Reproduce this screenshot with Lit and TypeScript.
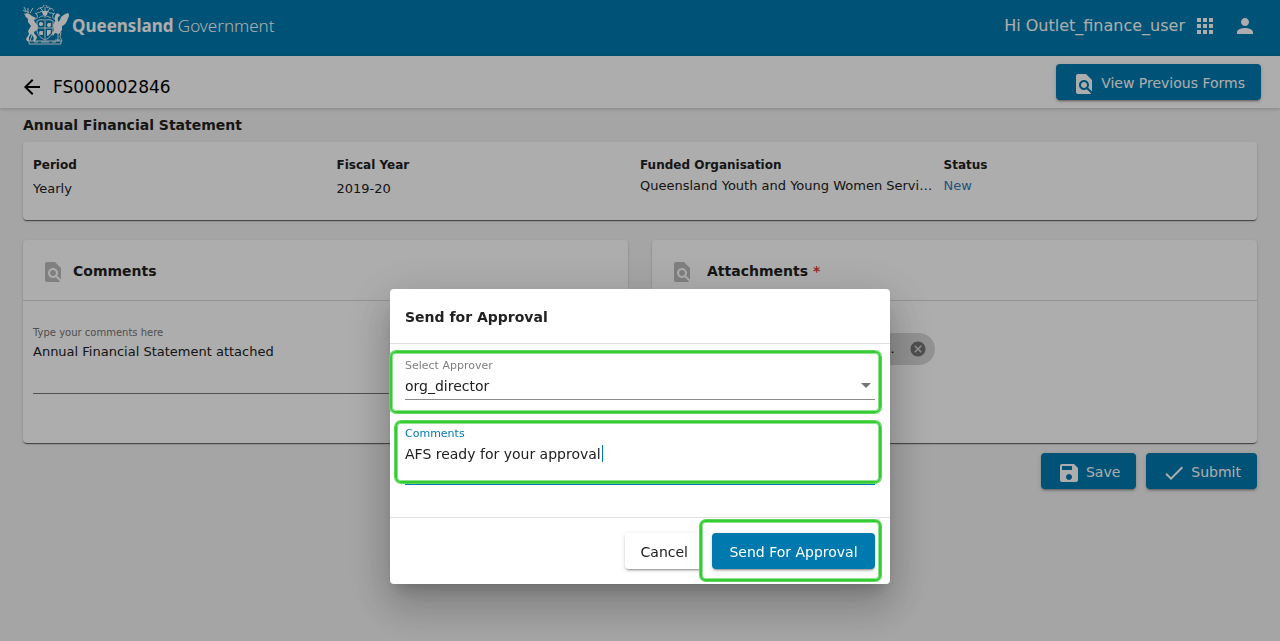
import { LitElement, html, css, svg } from "lit";
import { customElement, state } from "lit/decorators.js";

const paths: Record<string, string> = {
  find: "M20 19.59V8l-6-6H6c-1.1 0-1.99.9-1.99 2L4 20c0 1.1.89 2 1.99 2H18c.45 0 .85-.15 1.19-.4l-4.43-4.43c-.8.52-1.74.83-2.76.83-2.76 0-5-2.24-5-5s2.24-5 5-5 5 2.24 5 5c0 1.02-.31 1.96-.83 2.75L20 19.59zM9 13c0 1.66 1.34 3 3 3s3-1.34 3-3-1.34-3-3-3-3 1.34-3 3z",
  save: "M17 3H5c-1.11 0-2 .9-2 2v14c0 1.1.89 2 2 2h14c1.1 0 2-.9 2-2V7l-4-4zm-5 16c-1.66 0-3-1.34-3-3s1.34-3 3-3 3 1.34 3 3-1.34 3-3 3zm3-10H5V5h10v4z",
  check: "M9 16.17L4.83 12l-1.42 1.41L9 19 21 7l-1.41-1.41z",
  apps: "M4 8h4V4H4v4zm6 12h4v-4h-4v4zm-6 0h4v-4H4v4zm0-6h4v-4H4v4zm6 0h4v-4h-4v4zm6-10v4h4V4h-4zm-6 4h4V4h-4v4zm6 6h4v-4h-4v4zm0 6h4v-4h-4v4z",
  person: "M12 12c2.21 0 4-1.79 4-4s-1.79-4-4-4-4 1.79-4 4 1.79 4 4 4zm0 2c-2.67 0-8 1.34-8 4v2h16v-2c0-2.66-5.33-4-8-4z",
  back: "M20 11H7.83l5.59-5.59L12 4l-8 8 8 8 1.41-1.41L7.83 13H20v-2z",
  cancel: "M12 2C6.47 2 2 6.47 2 12s4.47 10 10 10 10-4.47 10-10S17.53 2 12 2zm5 13.59L15.59 17 12 13.41 8.41 17 7 15.59 10.59 12 7 8.41 8.41 7 12 10.59 15.59 7 17 8.41 13.41 12 17 15.59z",
};

const icon = (name: string, size = 24) =>
  html`<svg class="icon" width=${size} height=${size} viewBox="0 0 24 24" aria-hidden="true">
    ${svg`<path d=${paths[name]} fill="currentColor"/>`}
  </svg>`;

const crest = html`<svg class="crest" width="46" height="40" viewBox="0 0 46 40" fill="none" stroke="#fff" aria-hidden="true">
  <g stroke-width="0.9">
    <path d="M14 5c2-3 3-1 4-3 1 2 2 0 3-2 2-1 3 1 3 3 1-2 3-1 3 1 2-1 3 0 4 2M13 9c2-3 4 0 5-3 2 2 4 2 7 0 1 3 3 1 6 3M16 13c2-3 4-1 6-3 2 2 3 1 6 3"/>
    <path d="M12 8c2 1 3 3 2 5s-3 1-3-1M32 8c-2 1-3 3-2 5s2 1 3-1M17 3l3 3M27 3l-2 3M22 2v11"/>
    <path d="M14 16c3-2 5-1 8-1s5-1 8 1v9c0 5-4 8-8 10-4-2-8-5-8-10z"/>
    <path d="M14 23h16M22 16v18M16 19h4M18 17v4M25 18l3 3M28 18l-3 3M17 26l3 4M20 26l-3 4M25 26v5M27 26v3"/>
    <path d="M1 2l2 4 3 2M0 5l3 2M5 3v4M1 9l4 1M10 3l-3 5"/>
    <path d="M5 36h34M6 39h32M6 36v3M11 37h4M18 37h8M29 37h4M38 36v3"/>
    <path d="M35 28v8M38 27l-1 5 2 4M32 35h5M7 36l2-6M12 35l-2-5"/>
  </g>
  <g fill="#fff" stroke="none">
    <path d="M3 8c2 0 4 1 6 3l4 2-2 2c1 3 3 4 4 6l-1 4-3 2c0 3 3 3 3 6l-2 3h-2l1-4-3-3-2 3v4H4l-1-2 3-5-1-3 3-5-3-4v-3L2 11z"/>
    <path d="M38 12c2-1 3-3 7-4 1 1 1 2 1 3-2 4-2 8-7 10l0 4-3 4-4-1-2 3-1-2 2-4-1-5 2-4 3 1 2-2z"/>
    <path d="M33 9c2-1 4 0 4 2l-2 1c-1 3 1 5 0 8h-2c0-3-2-5-1-9z"/>
    <circle cx="18" cy="19" r="2"/><circle cx="26" cy="20" r="2"/><circle cx="18" cy="28" r="2"/>
    <path d="M19 6h6l-1 4h-4zM24 25h4l-1 4-3 2z"/>
  </g>
</svg>`;

@customElement("app-root")
export class AppRoot extends LitElement {
  @state() private open = true;

  static styles = css`
    :host {
      --blue: #007aae;
      display: block;
      min-height: 100vh;
      background: #f3f3f3;
      color: #212121;
      font-family: Verdana, "DejaVu Sans", sans-serif;
      font-size: 13px;
      line-height: 20px;
    }
    * { box-sizing: border-box; }
    h1, h2, p, dl, dd, dt { margin: 0; font-size: inherit; }
    button, select, textarea { font: inherit; color: inherit; border: 0; background: none; padding: 0; }
    button { cursor: pointer; }
    .icon { display: block; flex: none; }
    .top {
      display: flex; align-items: center; justify-content: space-between;
      height: 56px; padding: 0 23px; background: var(--blue); color: #fff;
    }
    .brand { display: flex; align-items: center; gap: 3px; font: 300 17px/24px "Noto Sans", sans-serif; }
    .brand b { font-weight: 700; }
    .brand .crest { margin-bottom: 7px; }
    .brand p { margin-bottom: 5px; }
    .user { display: flex; align-items: center; gap: 8px; font-size: 16px; margin-bottom: 4px; }
    .user button + button { margin-left: 8px; }
    .bar {
      display: flex; align-items: center; justify-content: space-between;
      height: 52px; padding: 0 19px 0 20px; background: #fff; color: #000;
      box-shadow: 0 1px 4px rgba(0, 0, 0, 0.2); font-size: 17px;
    }
    .crumb { display: flex; align-items: center; gap: 9px; margin-top: 9px; }
    .crumb h1 { font-weight: 400; }
    .btn {
      display: flex; align-items: center; justify-content: center; gap: 5px;
      height: 36px; padding: 1px 16px 0;
      border-radius: 4px; background: var(--blue); color: #fff; font-size: 14px; white-space: nowrap;
      box-shadow: 0 3px 1px -2px rgba(0, 0, 0, 0.2), 0 2px 2px rgba(0, 0, 0, 0.14), 0 1px 5px rgba(0, 0, 0, 0.12);
    }
    .btn .icon { margin-top: 3px; }
    .btn.plain { background: #fff; color: #212121; }
    main { padding: 7px 23px; }
    .title { font-size: 14px; font-weight: 700; }
    .card {
      background: #fff; border-radius: 4px;
      box-shadow: 0 2px 1px -1px rgba(0, 0, 0, 0.4), 0 1px 1px rgba(0, 0, 0, 0.28), 0 1px 3px rgba(0, 0, 0, 0.12);
    }
    .facts {
      display: grid; grid-template-columns: repeat(4, 1fr); min-height: 78px;
      margin-top: 7px; padding: 13px 10px;
    }
    .facts > div { min-width: 0; padding-right: 8px; }
    .facts dt { font-weight: 700; font-size: 12px; }
    .facts dd { margin-top: 4px; overflow: hidden; white-space: nowrap; text-overflow: ellipsis; }
    .facts .tight dd { margin-top: 1px; }
    .status { color: #337ab7; }
    .panels { display: grid; grid-template-columns: 1fr 1fr; gap: 24px; margin-top: 20px; }
    .panels .card { min-height: 203px; }
    .panels header {
      display: flex; align-items: center; gap: 8px; height: 61px; padding: 2px 18px 0;
      border-bottom: 1px solid #d8d8d8; font-size: 14px;
    }
    .panels .wide { gap: 13px; }
    .panels header .icon { color: #bdbdbd; margin-top: 2px; }
    .req { color: #e53935; }
    .field { display: flex; flex-direction: column; }
    .note { padding: 25px 10px; }
    .note label { font-size: 10px; line-height: 14px; color: #757575; }
    .note textarea { height: 54px; padding-top: 2px; border-bottom: 1px solid #757575; resize: none; outline: 0; }
    .files { padding: 32px 10px; }
    .chip {
      display: flex; align-items: center; justify-content: space-between; gap: 14px;
      width: 273px; height: 32px; padding: 0 8px 0 12px; border-radius: 16px; background: #d8d8d8; color: #000;
    }
    .chip span { overflow: hidden; white-space: nowrap; text-overflow: ellipsis; }
    .chip button { color: #757575; }
    .actions { display: flex; justify-content: flex-end; gap: 10px; margin-top: 10px; }
    .scrim {
      position: fixed; inset: 0; display: flex; justify-content: center; align-items: flex-start;
      padding-top: 289px; background: rgba(0, 0, 0, 0.32);
    }
    .dialog {
      width: 500px; max-width: 90vw; background: #fff; border-radius: 4px;
      box-shadow: 0 11px 15px -7px rgba(0, 0, 0, 0.2), 0 24px 38px 3px rgba(0, 0, 0, 0.14), 0 9px 46px 8px rgba(0, 0, 0, 0.12);
    }
    .dialog header { padding: 18px 15px 16px; border-bottom: 1px solid #e0e0e0; font-size: 14px; }
    .fields { display: grid; gap: 27px; padding: 15px 15px 32px; }
    .fields .field, .send, .send .btn { position: relative; }
    .send .btn { min-width: 163px; }
    .fields label { font-size: 11px; line-height: 14px; color: #808080; }
    .fields select {
      appearance: none; height: 27px; border-bottom: 1px solid #8a8a8a; font-size: 14px; outline: 0;
    }
    .arrow { position: absolute; right: 4px; bottom: 12px; }
    .fields .active label { color: var(--blue); }
    .fields textarea {
      height: 44px; padding-top: 3px; border-bottom: 2px solid var(--blue);
      font-size: 14px; resize: none; outline: 0; caret-color: transparent;
    }
    .caret { position: absolute; left: 197px; top: 18px; width: 1px; height: 17px; background: var(--blue); }
    .dialog footer {
      display: flex; justify-content: flex-end; gap: 8px; padding: 15px; border-top: 1px solid #e0e0e0;
    }
    .mark {
      position: absolute; pointer-events: none; border: 2px solid #33cc33; border-radius: 6px;
      box-shadow: 0 0 0 1px #5fd75f, inset 0 0 0 1px #8fe38f;
    }
    .mark.a { inset: -8px -6px -13px -15px; }
    .mark.b { inset: -6px -6px 2px -10px; }
    .mark.c { inset: -13px -6px -12px -12px; background: #fff; }
  `;

  render() {
    return html`
      <div class="top">
        <div class="brand">${crest}<p><b>Queensland</b> Government</p></div>
        <div class="user">
          <span>Hi Outlet_finance_user</span>
          <button aria-label="Apps">${icon("apps")}</button>
          <button aria-label="Account">${icon("person")}</button>
        </div>
      </div>
      <div class="bar">
        <div class="crumb">
          <button aria-label="Back">${icon("back")}</button>
          <h1>FS000002846</h1>
        </div>
        <button class="btn">${icon("find")}View Previous Forms</button>
      </div>
      <main>
        <h2 class="title">Annual Financial Statement</h2>
        <dl class="card facts">
          <div><dt>Period</dt><dd>Yearly</dd></div>
          <div><dt>Fiscal Year</dt><dd>2019-20</dd></div>
          <div class="tight"><dt>Funded Organisation</dt><dd>Queensland Youth and Young Women Services</dd></div>
          <div class="tight"><dt>Status</dt><dd class="status">New</dd></div>
        </dl>
        <div class="panels">
          <section class="card">
            <header>${icon("find")}<h2>Comments</h2></header>
            <div class="field note">
              <label for="note">Type your comments here</label>
              <textarea id="note" .value=${"Annual Financial Statement attached"}></textarea>
            </div>
          </section>
          <section class="card">
            <header class="wide">${icon("find")}<h2>Attachments <span class="req">*</span></h2></header>
            <div class="files">
              <div class="chip">
                <span>Annual Financial Statement 2019-20</span>
                <button aria-label="Remove">${icon("cancel", 18)}</button>
              </div>
            </div>
          </section>
        </div>
        <div class="actions">
          <button class="btn">${icon("save")}Save</button>
          <button class="btn">${icon("check")}Submit</button>
        </div>
      </main>
      ${this.open ? this.dialog() : ""}
    `;
  }

  private dialog() {
    const close = () => (this.open = false);
    return html`
      <div class="scrim">
        <div class="dialog" role="dialog" aria-modal="true" aria-labelledby="heading">
          <header><h2 id="heading">Send for Approval</h2></header>
          <div class="fields">
            <div class="field">
              <label for="approver">Select Approver</label>
              <select id="approver"><option>org_director</option></select>
              <svg class="arrow" width="10" height="5" viewBox="0 0 10 5" aria-hidden="true"><path d="M0 0h10L5 5z" fill="#757575"/></svg>
              <div class="mark a"></div>
            </div>
            <div class="field active">
              <label for="message">Comments</label>
              <textarea id="message" .value=${"AFS ready for your approval"}></textarea>
              <i class="caret"></i>
              <div class="mark b"></div>
            </div>
          </div>
          <footer>
            <button class="btn plain" @click=${close}>Cancel</button>
            <div class="send">
              <div class="mark c"></div>
              <button class="btn" @click=${close}>Send For Approval</button>
            </div>
          </footer>
        </div>
      </div>
    `;
  }
}
